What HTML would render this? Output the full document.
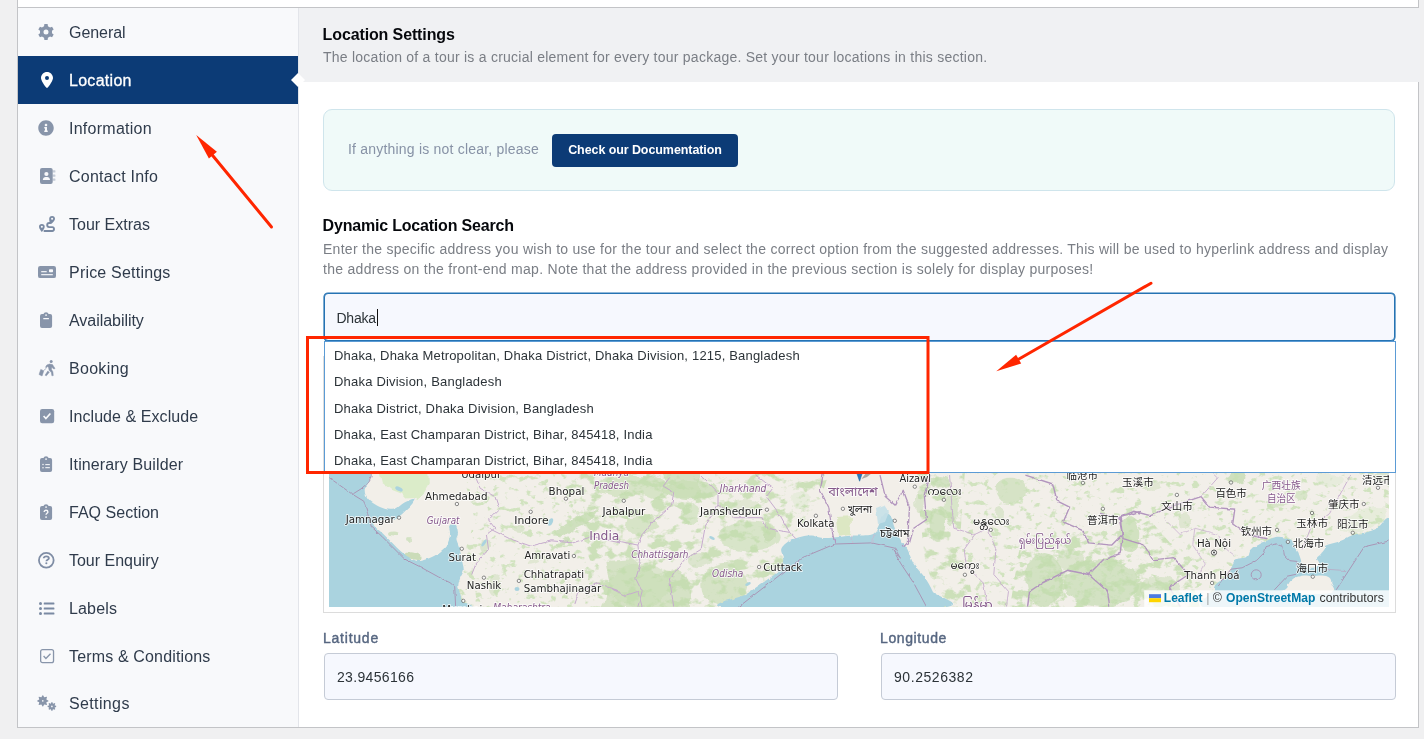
<!DOCTYPE html>
<html lang="en">
<head>
<meta charset="utf-8">
<title>Location Settings</title>
<style>
*{box-sizing:border-box;margin:0;padding:0}
html,body{width:1424px;height:739px;overflow:hidden;background:#f0f0f1}
body{position:relative;font-family:"Liberation Sans",sans-serif;color:#1d2327;-webkit-font-smoothing:antialiased}
.abs{position:absolute}
#root{position:absolute;left:0;top:0;width:1424px;height:739px;overflow:hidden;will-change:transform}
#topbox{left:17px;top:-20px;width:1402px;height:28px;background:#fff;border:1px solid #c3c4c7}
#wrap{left:17px;top:8px;width:1402px;height:720px;background:#fff;border:1px solid #c3c4c7;border-top:none}
#side{left:18px;top:8px;width:280px;height:719px;background:#f8f9fb}
#sideline{left:298px;top:8px;width:1px;height:719px;background:#e3e5ea}
.item{position:absolute;left:0;width:280px;height:48px;line-height:48px;padding-left:51px;font-size:16px;color:#2f3b4b;white-space:nowrap;letter-spacing:.15px}
.item.active{background:#0c3b76;color:#fff;-webkit-text-stroke:.3px #fff}
.item svg{position:absolute;left:18px;top:14px;width:20px;height:20px;fill:#8693a8;overflow:visible}
.item.active svg{fill:#fff}
#diamond{left:291px;top:73px;width:14px;height:14px}
#head{left:299px;top:8px;width:1121px;height:74px;background:#f0f1f3}
#head h1{position:absolute;left:23.6px;top:16.5px;font-size:16px;line-height:20px;font-weight:700;color:#06080c;white-space:nowrap}
#head p{position:absolute;left:24px;top:40px;font-size:14px;line-height:18px;color:#7a7e85;white-space:nowrap}
#notice{left:323px;top:109px;width:1072px;height:82px;background:#f0faf9;border:1px solid #cfe5ec;border-radius:9px}
#notice span{position:absolute;left:24px;top:30px;font-size:14px;line-height:18px;color:#8792a6;white-space:nowrap}
#btn{left:552px;top:134px;width:186px;height:33px;border-radius:4px;background:#0c3b76;color:#fff;font-size:12.5px;font-weight:700;line-height:33px;text-align:center;white-space:nowrap}
#h2{left:322.6px;top:216px;font-size:16px;line-height:20px;font-weight:700;color:#06080c;white-space:nowrap}
.desc{font-size:14px;line-height:18px;color:#7a7e85;white-space:nowrap}
#search{left:324px;top:293px;width:1071px;height:48px;border:1px solid #2573b3;box-shadow:0 0 0 .6px #2573b3;border-radius:4px;background:#f6f8fe}
#search span{position:absolute;left:11.5px;top:15px;font-size:14px;line-height:18px;color:#2c3338;white-space:nowrap}
#caret{left:377px;top:309px;width:1px;height:17px;background:#111}
#mapbox{left:323px;top:356px;width:1073px;height:257px;border:1px solid #dcdcdc;background:#fff}
#map{left:329px;top:362px;width:1060px;height:245px;overflow:hidden;background:#f2efe9}
#dd{left:324px;top:341px;width:1072px;height:132px;background:#fff;border:1px solid #5b9bd5}
#dd div{position:absolute;left:9px;font-size:13px;line-height:16px;color:#2c3338;white-space:nowrap}
.lbl{font-size:14px;line-height:18px;color:#566680;font-weight:400;-webkit-text-stroke:.4px #566680;white-space:nowrap}
.inp{height:47px;border:1px solid #c5cbd6;border-radius:4px;background:#f6f8fe}
.inp span{position:absolute;left:12px;top:14px;font-size:14px;line-height:18px;color:#2c3338;white-space:nowrap;letter-spacing:.2px}
#anno{left:0;top:0;width:1424px;height:739px;pointer-events:none}
#t1{letter-spacing:-0.125px}
#t2{letter-spacing:0.243px}
#t3{letter-spacing:0.205px}
#t4{letter-spacing:-0.083px}
#t5{letter-spacing:-0.195px}
#t6{letter-spacing:0.273px}
#t7{letter-spacing:0.286px}
#d1{letter-spacing:0.189px}
#d2{letter-spacing:0.202px}
#d3{letter-spacing:0.217px}
#d4{letter-spacing:0.193px}
#d5{letter-spacing:0.193px}
#t8{letter-spacing:-0.250px}
#t9{letter-spacing:0.770px}
#t10{letter-spacing:0.600px}
#t11{letter-spacing:0.334px}
#t12{letter-spacing:0.555px}
#s0{letter-spacing:-0.066px}
#s1{letter-spacing:0.284px}
#s2{letter-spacing:0.260px}
#s3{letter-spacing:0.239px}
#s4{letter-spacing:0.000px}
#s5{letter-spacing:0.204px}
#s6{letter-spacing:-0.040px}
#s7{letter-spacing:0.297px}
#s8{letter-spacing:0.062px}
#s9{letter-spacing:0.125px}
#s10{letter-spacing:0.020px}
#s11{letter-spacing:-0.017px}
#s12{letter-spacing:0.160px}
#s13{letter-spacing:0.151px}
#s14{letter-spacing:0.367px}
</style>
</head>
<body>
<div id="root">
<div id="topbox" class="abs"></div>
<div id="wrap" class="abs"></div>
<div id="side" class="abs">
<div class="item" style="top:0px;height:48px;line-height:49px"><svg viewBox="0 0 16 16" style="left:20.0px;top:16.0px;width:16px;height:16px;fill:#8895aa"><path fill-rule="evenodd" d="M9.95 13.78L9.62 15.94L6.38 15.94L6.05 13.78L3.97 12.58L1.94 13.37L0.32 10.57L2.02 9.21L2.02 6.79L0.32 5.43L1.94 2.63L3.97 3.42L6.05 2.22L6.38 0.06L9.62 0.06L9.95 2.22L12.03 3.42L14.06 2.63L15.68 5.43L13.98 6.79L13.98 9.21L15.68 10.57L14.06 13.37L12.03 12.58ZM5.50 8.00a2.50 2.50 0 1 0 5.00 0a2.50 2.50 0 1 0 -5.00 0Z"/></svg><span id="s0">General</span></div>
<div class="item active" style="top:48px;height:48px;line-height:49px"><svg viewBox="0 0 384 512" style="left:22.5px;top:16.0px;width:12px;height:16px;fill:#fff"><path d="M215.700 499.200C267 435 384 279.400 384 192C384 86 298 0 192 0S0 86 0 192c0 87.400 117 243 168.300 307.200c12.300 15.300 35.100 15.300 47.400 0zM192 128a64 64 0 1 1 0 128 64 64 0 1 1 0-128z"/></svg><span id="s1">Location</span></div>
<div class="item" style="top:96px;height:48px;line-height:49px"><svg viewBox="0 0 512 512" style="left:20.3px;top:16.0px;width:16px;height:16px;fill:#8895aa"><path d="M256 8C119.043 8 8 119.083 8 256c0 136.997 111.043 248 248 248s248-111.003 248-248C504 119.083 392.957 8 256 8zm0 110c23.196 0 42 18.804 42 42s-18.804 42-42 42-42-18.804-42-42 18.804-42 42-42zm56 254c0 6.627-5.373 12-12 12h-88c-6.627 0-12-5.373-12-12v-24c0-6.627 5.373-12 12-12h12v-64h-12c-6.627 0-12-5.373-12-12v-24c0-6.627 5.373-12 12-12h64c6.627 0 12 5.373 12 12v100h12c6.627 0 12 5.373 12 12v24z"/></svg><span id="s2">Information</span></div>
<div class="item" style="top:144px;height:48px;line-height:49px"><svg viewBox="0 0 16 16" style="left:21.5px;top:16.0px;width:16px;height:16px;fill:#8895aa"><rect x="0" y="0" width="12.700" height="16" rx="2"/><rect x="12.700" y="2.250" width="2.700" height="2.300" rx=".5" opacity=".45"/><rect x="12.700" y="6.400" width="2.700" height="2.300" rx=".5" opacity=".45"/><rect x="12.700" y="10.500" width="2.700" height="2.300" rx=".5" opacity=".45"/><circle cx="6.400" cy="6" r="2.100" fill="#f8f9fb"/><path d="M2.800 12c0-1.900 1.400-3 2.800-3h1.600c1.400 0 2.800 1.100 2.800 3z" fill="#f8f9fb"/></svg><span id="s3">Contact Info</span></div>
<div class="item" style="top:192px;height:48px;line-height:49px"><svg viewBox="0 0 16 16" style="left:20.5px;top:16.0px;width:16px;height:16px;fill:#8895aa"><g fill="#7a8aa3" stroke="#7a8aa3"><path stroke="none" d="M2.850 8a2.850 2.850 0 0 1 2.850 2.850c0 1.700-1.900 4.100-2.850 5.250C1.900 14.950 0 12.550 0 10.850A2.850 2.850 0 0 1 2.850 8z"/><path stroke="none" d="M13.100-.1a2.900 2.900 0 0 1 2.900 2.900c0 1.600-1.700 3.300-3.500 4.900l-1.900-1.600c-.3-.9-.4-2.100-.4-3.300A2.900 2.900 0 0 1 13.100-.1z"/><path d="M11.500 7H10.200a2.020 2.020 0 0 0 0 4.050H13.200a1.980 1.980 0 0 1 0 3.950H5.400" fill="none" stroke-width="1.850" stroke-linecap="round"/></g><circle cx="2.850" cy="10.800" r="1.050" fill="#f8f9fb"/><circle cx="13.100" cy="2.800" r="1.050" fill="#f8f9fb"/></svg><span id="s4">Tour Extras</span></div>
<div class="item" style="top:240px;height:48px;line-height:49px"><svg viewBox="0 0 18 12" style="left:19.6px;top:18.0px;width:18px;height:12px;fill:#8895aa"><rect x="0" y="0" width="18" height="12.100" rx="2.200"/><rect x="11" y="3.200" width="4" height="3" rx=".8" fill="#f8f9fb"/><rect x="3.200" y="5.100" width="5.500" height="1.150" fill="#f8f9fb"/><rect x="3.200" y="8.100" width="11.600" height="1.150" fill="#f8f9fb"/></svg><span id="s5">Price Settings</span></div>
<div class="item" style="top:288px;height:48px;line-height:49px"><svg viewBox="0 0 12.100 16" style="left:22.4px;top:16.0px;width:12.1px;height:16px;fill:#8895aa"><path d="M3.500 2a2.600 2.200 0 0 1 5.100 0H10.100a2 2 0 0 1 2 2v10a2 2 0 0 1-2 2H2a2 2 0 0 1-2-2V4a2 2 0 0 1 2-2z"/><circle cx="6.050" cy="3.100" r=".9" fill="#f8f9fb"/><rect x="3.300" y="6" width="5.600" height="1.250" fill="#f8f9fb"/></svg><span id="s6">Availability</span></div>
<div class="item" style="top:336px;height:48px;line-height:49px"><svg viewBox="0 0 16 16" style="left:20.7px;top:16.0px;width:16px;height:16px;fill:#8895aa"><circle cx="12.160" cy="1.450" r="1.500"/><g stroke="#8895aa" stroke-width=".5" stroke-linejoin="round"><path d="M7.800 5 10.460 4.050 13.500 4.600 15 6.900 15.950 8.200 15.400 9 13.900 8.400 12.900 7.100 12.350 9.200 13.900 11.800 14.250 15.600 12.900 15.800 12.350 12.600 10.100 10.300 9.500 7.300 8.200 6.500 7.400 7.850 6.500 7.300z"/><path d="M8.750 11.100 10.300 12.200 7.400 15.800 6.100 15.200z"/><path d="M1.750 9.400 4.800 10.700 3.070 16 .04 14.500z"/></g><path d="M6.800 8.400 5.200 10.400" fill="none" stroke="#8895aa" stroke-width=".8"/></svg><span id="s7">Booking</span></div>
<div class="item" style="top:384px;height:48px;line-height:49px"><svg viewBox="0 0 14.200 14.200" style="left:21.5px;top:16.9px;width:14.2px;height:14.2px;fill:#8895aa"><rect width="14.200" height="14.200" rx="2.200"/><path d="M3.600 7 5.900 9.500 10.400 4.550" fill="none" stroke="#f8f9fb" stroke-width="1.700"/></svg><span id="s8">Include &amp; Exclude</span></div>
<div class="item" style="top:432px;height:48px;line-height:49px"><svg viewBox="0 0 12.100 16" style="left:22.4px;top:16.0px;width:12.1px;height:16px;fill:#8895aa"><path d="M3.500 2a2.600 2.200 0 0 1 5.100 0H10.100a2 2 0 0 1 2 2v10a2 2 0 0 1-2 2H2a2 2 0 0 1-2-2V4a2 2 0 0 1 2-2z"/><circle cx="6.050" cy="3.100" r=".9" fill="#f8f9fb"/><circle cx="3" cy="8.600" r=".75" fill="#f8f9fb"/><circle cx="3" cy="11.650" r=".75" fill="#f8f9fb"/><rect x="5.300" y="8.100" width="4.550" height="1.050" fill="#f8f9fb"/><rect x="5.300" y="11.150" width="4.550" height="1.050" fill="#f8f9fb"/></svg><span id="s9">Itinerary Builder</span></div>
<div class="item" style="top:480px;height:48px;line-height:49px"><svg viewBox="0 0 12.100 16" style="left:22.4px;top:16.0px;width:12.1px;height:16px;fill:#8895aa"><path d="M3.500 2a2.600 2.200 0 0 1 5.100 0H10.100a2 2 0 0 1 2 2v10a2 2 0 0 1-2 2H2a2 2 0 0 1-2-2V4a2 2 0 0 1 2-2z"/><circle cx="6.050" cy="3.100" r=".9" fill="#f8f9fb"/><path d="M4.200 7.900c0-1 .8-1.650 1.850-1.650S7.900 6.900 7.900 7.900c0 1.300-1.850 1.300-1.850 2.800" fill="none" stroke="#f8f9fb" stroke-width="1.400"/><circle cx="6.050" cy="13.100" r=".9" fill="#f8f9fb"/></svg><span id="s10">FAQ Section</span></div>
<div class="item" style="top:528px;height:48px;line-height:49px"><svg viewBox="0 0 16.600 16.600" style="left:20.1px;top:15.7px;width:16.6px;height:16.6px;fill:#8895aa"><g fill="#7f8da5" stroke="#7f8da5"><circle cx="8.300" cy="8.300" r="7.350" fill="none" stroke-width="1.800"/><path d="M5.700 6.300c0-1.200 1.100-2 2.600-2s2.600.8 2.600 2c0 1.500-2.500 1.500-2.500 2.900" fill="none" stroke-width="1.800"/><circle cx="8.350" cy="11.200" r="1.050" stroke="none"/></g></svg><span id="s11">Tour Enquiry</span></div>
<div class="item" style="top:576px;height:48px;line-height:49px"><svg viewBox="0 0 16 13" style="left:21.0px;top:17.5px;width:16px;height:13px;fill:#8895aa"><g fill="#7a8aa3"><circle cx="1.500" cy="1.500" r="1.500"/><circle cx="1.500" cy="6.500" r="1.500"/><circle cx="1.500" cy="11.500" r="1.500"/><rect x="4.750" y=".55" width="10.650" height="1.900" rx=".5"/><rect x="4.750" y="5.550" width="10.650" height="1.900" rx=".5"/><rect x="4.750" y="10.550" width="10.650" height="1.900" rx=".5"/></g></svg><span id="s12">Labels</span></div>
<div class="item" style="top:624px;height:48px;line-height:49px"><svg viewBox="0 0 14.200 14.200" style="left:21.5px;top:16.9px;width:14.2px;height:14.2px;fill:#8895aa"><rect x=".65" y=".65" width="12.900" height="12.900" rx="1.900" fill="none" stroke="#8895aa" stroke-width="1.300"/><path d="M3.600 7.100 5.900 9.450 10.500 4.700" fill="none" stroke="#8895aa" stroke-width="1.350"/></svg><span id="s13">Terms &amp; Conditions</span></div>
<div class="item" style="top:672px;height:47px;line-height:48px"><svg viewBox="0 0 20 17" style="left:18.5px;top:15.0px;width:20px;height:17px;fill:#8895aa"><path fill-rule="evenodd" d="M7.22 9.53L6.06 11.59L5.54 11.59L4.38 9.53L4.24 9.47L1.95 10.11L1.59 9.75L2.23 7.46L2.17 7.32L0.11 6.16L0.11 5.64L2.17 4.48L2.23 4.34L1.59 2.05L1.95 1.69L4.24 2.33L4.38 2.27L5.54 0.21L6.06 0.21L7.22 2.27L7.36 2.33L9.65 1.69L10.01 2.05L9.37 4.34L9.43 4.48L11.49 5.64L11.49 6.16L9.43 7.32L9.37 7.46L10.01 9.75L9.65 10.11L7.36 9.47ZM5.00 5.90a0.80 0.80 0 1 0 1.60 0a0.80 0.80 0 1 0 -1.60 0Z"/><path fill-rule="evenodd" d="M15.90 14.28L15.47 15.66L14.33 15.66L13.90 14.28L13.57 14.14L12.29 14.82L11.48 14.01L12.16 12.73L12.02 12.40L10.64 11.97L10.64 10.83L12.02 10.40L12.16 10.07L11.48 8.79L12.29 7.98L13.57 8.66L13.90 8.52L14.33 7.14L15.47 7.14L15.90 8.52L16.23 8.66L17.51 7.98L18.32 8.79L17.64 10.07L17.78 10.40L19.16 10.83L19.16 11.97L17.78 12.40L17.64 12.73L18.32 14.01L17.51 14.82L16.23 14.14ZM14.05 11.40a0.85 0.85 0 1 0 1.70 0a0.85 0.85 0 1 0 -1.70 0Z"/></svg><span id="s14">Settings</span></div>
</div>
<div id="sideline" class="abs"></div>
<div id="head" class="abs">
  <h1 id="t1">Location Settings</h1>
  <p id="t2">The location of a tour is a crucial element for every tour package. Set your tour locations in this section.</p>
</div>
<svg id="diamond" class="abs" viewBox="0 0 14 14"><path d="M0 7L7 0L14 7L7 14Z" fill="#fff"/></svg>

<div id="notice" class="abs"><span id="t3">If anything is not clear, please</span></div>
<div id="btn" class="abs"><span id="t4">Check our Documentation</span></div>

<div id="h2" class="abs"><span id="t5">Dynamic Location Search</span></div>
<div id="t6" class="abs desc" style="left:323px;top:240px">Enter the specific address you wish to use for the tour and select the correct option from the suggested addresses. This will be used to hyperlink address and display</div>
<div id="t7" class="abs desc" style="left:323px;top:260px">the address on the front-end map. Note that the address provided in the previous section is solely for display purposes!</div>

<div id="search" class="abs"><span id="t8">Dhaka</span></div>
<div id="caret" class="abs"></div>

<div id="mapbox" class="abs"></div>
<div id="map" class="abs">
<svg viewBox="329 362 1060 245" width="1060" height="245" style="position:absolute;left:0;top:0">
<defs><filter id="rough" x="-5%" y="-5%" width="110%" height="110%"><feTurbulence type="fractalNoise" baseFrequency="0.09" numOctaves="2" seed="4" result="n"/><feDisplacementMap in="SourceGraphic" in2="n" scale="7" xChannelSelector="R" yChannelSelector="G"/></filter><filter id="speck" x="0" y="0" width="100%" height="100%"><feTurbulence type="fractalNoise" baseFrequency="0.075 0.1" numOctaves="4" seed="11" result="n"/><feColorMatrix in="n" type="matrix" values="0 0 0 0 0 0 0 0 0 0 0 0 0 0 0 7 0 0 0 -3.55" result="m"/><feComposite in="SourceGraphic" in2="m" operator="in"/></filter><filter id="speck2" x="0" y="0" width="100%" height="100%"><feTurbulence type="fractalNoise" baseFrequency="0.12 0.16" numOctaves="3" seed="5" result="n"/><feColorMatrix in="n" type="matrix" values="0 0 0 0 0 0 0 0 0 0 0 0 0 0 0 8 0 0 0 -4.7" result="m"/><feComposite in="SourceGraphic" in2="m" operator="in"/></filter><filter id="rough2" x="-5%" y="-5%" width="110%" height="110%"><feTurbulence type="fractalNoise" baseFrequency="0.16" numOctaves="2" seed="9" result="n"/><feDisplacementMap in="SourceGraphic" in2="n" scale="3" xChannelSelector="R" yChannelSelector="G"/></filter></defs>
<rect x="329" y="362" width="1060" height="245" fill="#f2efe9"/>
<g filter="url(#rough)" opacity=".8"><path d="M379.0 470.0 L428.2 470.0 L428.8 483.3 L423.5 492.7 L416.3 501.2 L413.6 498.0 L406.4 498.4 L400.8 492.7 L391.3 488.9 L381.8 481.4 Z" fill="#d3ebbf" opacity="0.95"/><path d="M553.4 532.5 L568.5 521.2 L583.7 513.6 L598.9 510.7 L593.2 519.3 L576.1 526.9 L561.0 538.2 Z" fill="#bcd8a6" opacity=".8"/><path d="M555.3 545.8 L568.5 536.3 L570.4 540.1 L559.1 547.7 Z" fill="#bcd8a6" opacity=".8"/><path d="M591.3 481.4 L627.3 474.0 L659.5 478.0 L674.7 490.8 L659.5 500.3 L640.6 492.7 L614.0 496.5 L598.9 492.7 Z" fill="#c3dcae" opacity=".7"/><path d="M627.3 517.4 L651.9 513.6 L659.5 526.9 L640.6 536.3 L625.4 530.6 Z" fill="#c3dcae" opacity=".7"/><path d="M606.4 561.0 L633.0 559.1 L659.5 576.1 L678.5 568.5 L690.0 583.7 L690.0 607.0 L602.6 607.0 L610.2 583.7 Z" fill="#bfd9a9" opacity=".7"/><path d="M659.5 470.0 L700.0 470.0 L700.0 498.4 L674.7 496.5 Z" fill="#bfd9a9" opacity=".7"/><ellipse cx="690.6" cy="490.3" rx="27.0" ry="9.0" fill="#bcd8a6" opacity="0.70"/><ellipse cx="689.5" cy="514.5" rx="10.0" ry="10.0" fill="#bcd8a6" opacity="0.60"/><ellipse cx="749.6" cy="536.6" rx="31.0" ry="15.0" fill="#bcd8a6" opacity="0.60"/><ellipse cx="724.3" cy="585.0" rx="23.0" ry="22.0" fill="#bcd8a6" opacity="0.65"/><ellipse cx="640.0" cy="585.0" rx="30.0" ry="22.0" fill="#bcd8a6" opacity="0.50"/><ellipse cx="770.1" cy="534.5" rx="6.0" ry="8.0" fill="#bcd8a6" opacity="0.85"/><ellipse cx="520.0" cy="528.0" rx="8.0" ry="4.0" fill="#bcd8a6" opacity="0.50"/><ellipse cx="537.0" cy="560.0" rx="9.0" ry="3.0" fill="#bcd8a6" opacity="0.40" transform="rotate(-25 537.0 560.0)"/><ellipse cx="486.0" cy="545.0" rx="5.0" ry="7.0" fill="#bcd8a6" opacity="0.50"/><ellipse cx="495.0" cy="585.0" rx="6.0" ry="12.0" fill="#bcd8a6" opacity="0.45"/><ellipse cx="700.0" cy="560.0" rx="12.0" ry="7.0" fill="#bcd8a6" opacity="0.50"/><ellipse cx="745.0" cy="505.0" rx="14.0" ry="6.0" fill="#bcd8a6" opacity="0.40"/><ellipse cx="800.0" cy="500.0" rx="10.0" ry="8.0" fill="#cfe6bd" opacity="0.35"/><ellipse cx="413.0" cy="556.0" rx="8.0" ry="4.0" fill="#b5d29f" opacity="0.80" transform="rotate(20 413.0 556.0)"/><ellipse cx="393.0" cy="534.0" rx="5.0" ry="2.5" fill="#bcd8a6" opacity="0.70"/><ellipse cx="409.0" cy="541.0" rx="2.0" ry="2.0" fill="#bcd8a6" opacity="0.70"/><path d="M836.0 518.0 L852.0 517.0 L851.0 535.0 L838.0 537.0 Z" fill="#d4e3b5" opacity=".9"/><ellipse cx="940.0" cy="481.9" rx="9.5" ry="6.0" fill="#bcd8a6" opacity="0.70"/><ellipse cx="936.9" cy="524.0" rx="8.4" ry="17.0" fill="#bcd8a6" opacity="0.70"/><ellipse cx="951.7" cy="506.0" rx="6.3" ry="18.0" fill="#bcd8a6" opacity="0.60"/><ellipse cx="1010.6" cy="490.3" rx="15.0" ry="12.6" fill="#bcd8a6" opacity="0.65"/><ellipse cx="1044.4" cy="580.0" rx="19.0" ry="27.0" fill="#bcd8a6" opacity="0.70"/><ellipse cx="1101.7" cy="583.0" rx="38.0" ry="24.0" fill="#bcd8a6" opacity="0.70"/><ellipse cx="1129.3" cy="534.0" rx="11.0" ry="18.0" fill="#bcd8a6" opacity="0.75"/><ellipse cx="1070.0" cy="560.0" rx="14.0" ry="10.0" fill="#bcd8a6" opacity="0.50"/><ellipse cx="1000.0" cy="515.0" rx="5.0" ry="10.0" fill="#bcd8a6" opacity="0.50"/><ellipse cx="920.0" cy="500.0" rx="5.0" ry="12.0" fill="#bcd8a6" opacity="0.50"/><ellipse cx="1185.0" cy="520.0" rx="6.0" ry="9.0" fill="#bcd8a6" opacity="0.45"/><ellipse cx="1160.0" cy="590.0" rx="20.0" ry="14.0" fill="#bcd8a6" opacity="0.50"/><ellipse cx="1235.9" cy="478.0" rx="9.5" ry="6.3" fill="#bcd8a6" opacity="0.80"/><ellipse cx="1278.0" cy="505.0" rx="11.0" ry="2.5" fill="#bcd8a6" opacity="0.60"/><ellipse cx="1302.2" cy="495.5" rx="6.3" ry="5.3" fill="#bcd8a6" opacity="0.60"/><ellipse cx="1363.3" cy="519.8" rx="25.0" ry="10.0" fill="#cfe6bd" opacity="0.40" transform="rotate(-20 1363.3 519.8)"/><ellipse cx="1150.0" cy="485.0" rx="10.0" ry="6.0" fill="#bcd8a6" opacity="0.40"/><ellipse cx="1330.0" cy="480.0" rx="14.0" ry="6.0" fill="#cfe6bd" opacity="0.35"/><ellipse cx="1383.0" cy="476.0" rx="8.0" ry="6.0" fill="#bcd8a6" opacity="0.50"/></g>
<g filter="url(#speck)" opacity=".8"><path d="M560.0 470.0 L830.0 470.0 L820.0 500.0 L790.0 540.0 L780.0 575.0 L740.0 607.0 L585.0 607.0 L590.0 560.0 L575.0 520.0 Z" fill="#c2dcad"/><path d="M1020.0 545.0 L1060.0 530.0 L1110.0 540.0 L1150.0 520.0 L1185.0 560.0 L1200.0 607.0 L1010.0 607.0 Z" fill="#c2dcad"/><path d="M915.0 470.0 L965.0 470.0 L960.0 540.0 L975.0 607.0 L940.0 607.0 L925.0 560.0 Z" fill="#c2dcad"/></g>
<g filter="url(#speck2)" opacity=".8"><path d="M462.0 470.0 L575.0 470.0 L590.0 530.0 L600.0 607.0 L450.0 607.0 L462.0 560.0 L475.0 520.0 Z" fill="#c8e0b5"/><path d="M965.0 470.0 L1389.0 470.0 L1389.0 540.0 L1330.0 535.0 L1290.0 540.0 L1240.0 560.0 L1215.0 607.0 L975.0 607.0 L960.0 540.0 Z" fill="#c8e0b5"/></g>
<g filter="url(#rough2)"><path d="M329.2 458.6 C336.2 433.7 364.4 455.9 371.4 458.6 C378.4 461.4 372.0 471.0 371.4 475.3 C370.8 479.6 368.7 482.1 367.6 484.2 C366.5 486.3 365.1 486.3 364.8 488.0 C364.5 489.7 364.8 492.4 365.7 494.6 C366.7 496.8 368.1 499.2 370.5 501.2 C372.8 503.3 376.6 505.5 379.9 506.9 C383.2 508.4 387.5 509.6 390.3 509.8 C393.2 509.9 394.6 509.1 397.0 507.9 C399.3 506.7 402.0 504.1 404.5 502.6 C407.1 501.1 410.9 499.4 412.5 499.0 C414.1 498.6 414.6 499.3 414.4 500.3 C414.2 501.3 412.7 503.3 411.2 505.0 C409.7 506.8 407.4 508.9 405.5 510.7 C403.6 512.6 401.1 514.8 399.8 516.0 C398.5 517.3 400.0 517.7 397.9 518.3 C395.9 518.9 390.7 519.2 387.5 519.6 C384.3 520.0 381.2 520.2 379.0 520.8 C376.7 521.3 374.6 522.1 373.9 523.0 C373.1 524.0 373.3 524.9 374.6 526.4 C375.9 528.0 379.4 530.2 381.8 532.5 C384.3 534.8 386.9 537.6 389.4 540.1 C391.9 542.6 394.4 545.3 397.0 547.7 C399.5 550.0 402.0 552.4 404.5 554.3 C407.1 556.2 409.8 557.9 412.1 559.0 C414.5 560.2 416.5 561.0 418.8 561.1 C421.0 561.2 423.0 560.2 425.4 559.4 C427.7 558.6 430.4 557.7 433.0 556.4 C435.5 555.0 438.3 553.2 440.5 551.4 C442.7 549.7 444.8 547.8 446.2 545.8 C447.7 543.7 448.6 541.3 449.2 539.1 C449.9 536.9 450.0 534.6 450.0 532.5 C450.0 530.4 448.8 528.2 449.1 526.8 C449.3 525.4 450.3 524.4 451.5 524.2 C452.7 523.9 455.0 523.8 456.1 525.3 C457.1 526.8 457.9 531.1 458.0 533.4 C458.0 535.8 456.3 537.1 456.4 539.1 C456.6 541.2 458.0 543.4 458.7 545.8 C459.4 548.1 460.0 550.5 460.6 553.3 C461.2 556.2 462.0 560.0 462.5 562.8 C463.0 565.6 464.0 567.9 463.6 570.4 C463.3 572.9 461.1 575.4 460.2 578.0 C459.3 580.5 458.4 583.0 458.3 585.5 C458.3 588.1 459.3 590.6 459.8 593.1 C460.4 595.6 461.2 598.2 461.7 600.7 C462.2 603.2 485.0 607.0 462.9 608.3 C440.8 609.5 351.5 633.2 329.2 608.3 C306.9 583.3 322.1 483.6 329.2 458.6Z" fill="#aad3df"/><path d="M728.5 608.0 C696.6 605.6 740.8 598.4 747.5 593.5 C754.2 588.6 763.2 582.7 768.5 578.8 C773.8 574.9 776.6 573.5 779.1 570.3 C781.6 567.1 782.9 563.3 783.3 559.8 C783.6 556.3 780.2 552.5 781.2 549.3 C782.2 546.1 786.1 542.9 789.6 540.8 C793.1 538.7 798.7 537.5 802.2 536.6 C805.7 535.7 807.5 535.4 810.7 535.6 C813.9 535.8 817.7 537.4 821.2 537.7 C824.7 538.1 826.4 538.1 831.7 537.7 C837.0 537.4 846.1 536.1 852.8 535.6 C859.5 535.1 867.6 535.9 871.8 534.5 C876.0 533.1 876.5 529.6 878.0 527.0 C879.5 524.4 879.5 521.2 880.5 519.0 C881.5 516.8 882.7 514.3 884.0 513.5 C885.3 512.7 887.2 513.2 888.5 514.0 C889.8 514.8 890.6 515.6 891.6 518.0 C892.6 520.4 893.2 524.4 894.8 528.2 C896.4 532.0 899.0 537.3 901.1 540.8 C903.2 544.3 905.3 545.4 907.4 549.3 C909.5 553.2 910.9 559.4 913.7 564.0 C916.5 568.6 921.1 572.1 924.3 576.7 C927.5 581.3 930.2 586.2 932.7 591.4 C935.2 596.6 973.0 605.2 939.0 608.0 C905.0 610.8 760.4 610.4 728.5 608.0Z" fill="#aad3df"/><path d="M876.0 508.0 L884.0 505.0 L889.0 512.0 L885.0 522.0 L878.0 524.0 Z" fill="#c5e0e8" opacity=".9"/><path d="M1214.0 609.9 C1184.6 606.5 1213.6 594.3 1214.0 589.8 C1214.5 585.4 1214.5 585.5 1216.9 583.2 C1219.2 580.9 1225.5 579.2 1228.1 576.2 C1230.7 573.1 1230.9 567.8 1232.3 564.9 C1233.7 562.1 1233.9 560.7 1236.5 559.3 C1239.1 557.9 1245.4 558.2 1247.8 556.5 C1250.1 554.9 1248.7 551.6 1250.6 549.5 C1252.4 547.4 1256.4 545.3 1259.0 543.9 C1261.6 542.5 1263.2 542.2 1266.0 541.1 C1268.8 539.9 1272.8 537.4 1275.8 536.9 C1278.9 536.3 1281.7 536.9 1284.3 537.6 C1286.8 538.3 1289.2 539.7 1291.3 541.1 C1293.4 542.5 1293.9 544.8 1296.9 546.0 C1300.0 547.2 1305.3 547.7 1309.6 548.1 C1313.8 548.4 1319.4 548.6 1322.2 548.1 C1325.0 547.6 1323.4 546.5 1326.4 545.3 C1329.4 544.1 1336.2 542.7 1340.4 541.1 C1344.7 539.4 1347.5 536.9 1351.7 535.4 C1355.9 534.0 1361.5 533.8 1365.7 532.6 C1369.9 531.5 1372.8 530.1 1377.0 528.4 C1381.2 526.8 1388.7 509.2 1391.0 522.8 C1393.4 536.4 1420.5 595.4 1391.0 609.9 C1361.5 624.4 1243.5 613.2 1214.0 609.9Z" fill="#aad3df"/></g>
<g filter="url(#rough2)"><path d="M1295.5 543.9 C1299.7 542.8 1319.3 544.3 1323.6 546.0 C1327.9 547.6 1322.2 551.7 1321.1 553.7 C1319.9 555.7 1317.1 556.3 1316.9 557.9 C1316.6 559.6 1319.7 562.0 1319.4 563.5 C1319.1 565.1 1317.2 566.7 1315.2 567.3 C1313.1 568.0 1309.1 568.0 1307.0 567.3 C1304.9 566.7 1303.7 565.1 1302.5 563.5 C1301.4 562.0 1301.0 559.8 1300.3 557.9 C1299.6 556.0 1299.1 554.6 1298.3 552.3 C1297.5 550.0 1291.3 544.9 1295.5 543.9Z" fill="#f2efe9"/><path d="M1289.9 581.8 C1291.2 580.2 1293.2 578.6 1295.5 577.6 C1297.8 576.6 1301.1 575.8 1303.9 575.6 C1306.7 575.4 1309.3 576.3 1312.4 576.3 C1315.4 576.3 1319.4 575.4 1322.2 575.6 C1325.0 575.8 1327.7 576.3 1329.2 577.6 C1330.8 578.8 1331.2 580.6 1331.5 583.2 C1331.7 585.8 1338.2 591.4 1330.6 593.0 C1323.0 594.7 1292.9 594.0 1285.7 593.0 C1278.5 592.1 1286.7 589.3 1287.4 587.4 C1288.1 585.5 1288.5 583.4 1289.9 581.8Z" fill="#f2efe9"/></g>
<ellipse cx="399" cy="489" rx="4" ry="2" fill="#aad3df" transform="rotate(25 399 489)"/>
<ellipse cx="550.5" cy="522" rx="2.200" ry="4" fill="#aad3df" transform="rotate(25 550.5 522)"/>
<ellipse cx="517" cy="589" rx="2.500" ry="2" fill="#aad3df"/>
<ellipse cx="484" cy="543" rx="1.500" ry="4" fill="#aad3df" transform="rotate(35 484 543)"/>
<ellipse cx="712" cy="538" rx="3" ry="1.500" fill="#aad3df" transform="rotate(25 712 538)"/>
<ellipse cx="748" cy="584" rx="3" ry="1.500" fill="#aad3df" transform="rotate(-25 748 584)"/>
<g filter="url(#rough2)" stroke-linejoin="round"><path d="M329.2 477.6 L351.5 493.7 L363.8 501.2 L367.6 513.6 L371.4 526.8 L381.8 536.3 L391.3 545.8 L404.5 559.0 L419.7 566.6 L438.6 577.0 L450.0 582.7 L454.7 586.5 L455.7 608.3" fill="none" stroke="#a995b5" stroke-width="1"/><path d="M371.4 475.3 L369.5 481.4 L361.0 488.9 L353.4 493.7" fill="none" stroke="#a995b5" stroke-width="1"/><path d="M736.9 608.3 L802.2 557.7 L834.9 544.0 L871.8 542.9 L894.9 548.2 L900.0 557.7 L892.7 549.3 L901.1 564.0 L913.7 583.0 L926.4 606.6" fill="none" stroke="#a995b5" stroke-width="1"/><path d="M834.9 544.0 L832.8 534.5 L828.6 507.1 L820.2 490.3 L823.3 473.4" fill="none" stroke="#b295be" stroke-width="1.200"/><path d="M852.8 542.9 L851.8 534.5" fill="none" stroke="#c9b9d0" stroke-width=".8"/><path d="M872.8 542.9 L873.9 534.5" fill="none" stroke="#c9b9d0" stroke-width=".8"/><path d="M1218.3 586.0 L1230.9 569.2 L1242.1 567.8 L1256.2 560.7 L1264.6 552.3 L1266.0 546.7 L1275.8 543.9 L1282.9 546.7 L1284.3 555.1 L1289.9 560.7 L1296.9 561.4 L1298.3 566.3" fill="none" stroke="#a995b5" stroke-width="1"/><path d="M1274.4 589.8 L1287.1 576.2 L1296.9 574.1" fill="none" stroke="#a995b5" stroke-width="1"/><path d="M1336.2 589.8 L1364.3 546.7 L1388.9 541.1" fill="none" stroke="#a995b5" stroke-width="1"/><path d="M1326.4 569.2 L1346.1 570.6" fill="none" stroke="#b9a9c4" stroke-width=".8"/><circle cx="1256.2" cy="574.8" r="5" fill="none" stroke="#a995b5" stroke-width="1"/><path d="M474.8 475.1 L480.1 488.2 L494.9 496.6 L499.1 509.2 L488.5 519.8 L494.9 528.2 L486.4 534.5 L488.5 549.3 L475.9 564.0 L471.7 574.5" fill="none" stroke="#c6abce" stroke-width="1"/><path d="M488.5 528.2 L509.6 538.7 L530.7 546.1 L551.7 540.8 L572.8 542.9 L591.8 536.6 L620.0 542.9 L616.9 540.8 L637.9 545.1 L642.1 534.5 L654.8 519.8 L671.6 505.0 L673.7 492.4 L663.2 486.1 L669.5 477.6" fill="none" stroke="#c6abce" stroke-width="1"/><path d="M574.9 604.0 L579.1 591.4 L598.1 583.0 L620.0 591.4 L612.6 589.3 L625.3 595.6 L637.9 591.4 L642.1 606.6" fill="none" stroke="#c6abce" stroke-width="1"/><path d="M637.9 545.1 L640.0 564.0 L635.8 578.8 L642.1 591.4 L637.9 606.6" fill="none" stroke="#c6abce" stroke-width="1"/><path d="M701.1 475.1 L718.0 492.4 L718.0 505.0 L734.8 517.7 L762.2 517.7 L766.4 528.2 L789.6 532.4 L795.9 538.7" fill="none" stroke="#c6abce" stroke-width="1"/><path d="M718.0 505.0 L705.3 526.1 L701.1 549.3 L684.3 559.8 L669.5 578.8 L673.7 606.6" fill="none" stroke="#c6abce" stroke-width="1"/><path d="M755.9 475.1 L772.8 488.2 L766.4 496.6 L779.1 513.5 L789.6 532.4" fill="none" stroke="#c6abce" stroke-width="1"/><path d="M880.0 475.1 L885.3 496.6 L894.8 505.0 L903.2 490.3 L909.5 507.1 L907.4 542.9 L903.2 547.2" fill="none" stroke="#b295be" stroke-width="1.300"/><path d="M930.6 475.1 L924.3 494.5 L926.4 519.8 L913.7 528.2 L909.5 542.9" fill="none" stroke="#b295be" stroke-width="1.300"/><path d="M1025.4 475.1 L1052.8 484.0 L1057.0 500.8 L1069.6 507.1 L1063.3 521.9 L1082.3 530.3 L1088.6 542.9 L1111.8 545.1 L1122.3 534.5 L1120.2 517.7 L1140.0 511.3" fill="none" stroke="#b295be" stroke-width="1.400"/><path d="M1122.3 534.5 L1120.2 553.5 L1103.3 559.8 L1088.6 574.5 L1067.5 570.3 L1042.2 583.0 L1029.6 591.4 L1027.5 606.6" fill="none" stroke="#b295be" stroke-width="1.400"/><path d="M1088.6 574.5 L1107.6 591.4 L1109.7 606.6" fill="none" stroke="#b295be" stroke-width="1.300"/><path d="M949.5 475.1 L953.8 528.2 L974.8 534.5 L987.5 528.2 L995.9 549.3 L993.8 574.5 L1008.5 591.4 L1006.4 606.6" fill="none" stroke="#c6abce" stroke-width=".9"/><path d="M974.8 534.5 L964.3 549.3 L966.4 566.1 L983.3 583.0 L987.5 606.6" fill="none" stroke="#c6abce" stroke-width=".9"/><path d="M1100.0 513.5 L1119.0 517.7 L1133.7 511.3 L1150.6 515.6 L1169.5 507.1 L1201.1 496.6 L1209.5 507.1 L1234.8 509.2 L1232.7 524.0 L1247.5 534.5 L1266.4 538.7" fill="none" stroke="#b295be" stroke-width="1.400"/><path d="M1119.0 517.7 L1123.2 538.7 L1144.2 545.1 L1152.7 559.8 L1173.7 557.7 L1188.5 574.5 L1169.5 587.2 L1180.1 606.6" fill="none" stroke="#b295be" stroke-width="1.300"/><path d="M1201.1 496.6 L1218.0 477.6 L1213.8 473.4" fill="none" stroke="#c6abce" stroke-width=".9"/><path d="M1350.7 475.1 L1342.3 490.3 L1329.6 513.5 L1310.7 528.2 L1302.2 549.3" fill="none" stroke="#c6abce" stroke-width=".9"/><path d="M1163.2 517.7 L1180.1 534.5 L1194.8 528.2 L1218.0 534.5 L1226.4 549.3 L1234.8 555.6" fill="none" stroke="#c6abce" stroke-width=".7"/><path d="M1194.8 528.2 L1192.7 545.1 L1205.3 564.0 L1196.9 578.8" fill="none" stroke="#c6abce" stroke-width=".7"/></g>
<path d="M861.500 479 L866 473 L872 473 L867 477 Z" fill="#000" opacity=".3"/>
<path d="M855 468 L864 468 L859.600 481.200 Z" fill="#2a7ab9" stroke="#2266a0" stroke-width=".6"/>
<text x="461.2" y="477.6" font-family="DejaVu Sans, sans-serif" font-size="11" fill="#222" textLength="40.0" lengthAdjust="spacingAndGlyphs" stroke="#fff" stroke-opacity=".75" stroke-width="1.8" paint-order="stroke" stroke-linejoin="round">Udaipur</text><text x="424.9" y="500.2" font-family="DejaVu Sans, sans-serif" font-size="11" fill="#222" textLength="62.6" lengthAdjust="spacingAndGlyphs" stroke="#fff" stroke-opacity=".75" stroke-width="1.8" paint-order="stroke" stroke-linejoin="round">Ahmedabad</text><circle cx="456.9" cy="504.0" r="1.7" fill="#fff" fill-opacity=".7" stroke="#6b6b6b" stroke-width=".8"/><text x="345.7" y="522.9" font-family="DejaVu Sans, sans-serif" font-size="11" fill="#222" textLength="49.1" lengthAdjust="spacingAndGlyphs" stroke="#fff" stroke-opacity=".75" stroke-width="1.8" paint-order="stroke" stroke-linejoin="round">Jamnagar</text><circle cx="399.0" cy="517.7" r="1.7" fill="#fff" fill-opacity=".7" stroke="#6b6b6b" stroke-width=".8"/><text x="426.8" y="523.6" font-family="DejaVu Sans, sans-serif" font-size="10" fill="#86598c" font-style="italic" textLength="32.7" lengthAdjust="spacingAndGlyphs" stroke="#fff" stroke-opacity=".75" stroke-width="1.8" paint-order="stroke" stroke-linejoin="round">Gujarat</text><text x="548.6" y="494.5" font-family="DejaVu Sans, sans-serif" font-size="11" fill="#222" textLength="35.8" lengthAdjust="spacingAndGlyphs" stroke="#fff" stroke-opacity=".75" stroke-width="1.8" paint-order="stroke" stroke-linejoin="round">Bhopal</text><circle cx="565.9" cy="498.7" r="1.7" fill="#fff" fill-opacity=".7" stroke="#6b6b6b" stroke-width=".8"/><text x="514.2" y="524.0" font-family="DejaVu Sans, sans-serif" font-size="11" fill="#222" textLength="34.4" lengthAdjust="spacingAndGlyphs" stroke="#fff" stroke-opacity=".75" stroke-width="1.8" paint-order="stroke" stroke-linejoin="round">Indore</text><circle cx="530.7" cy="511.8" r="1.7" fill="#fff" fill-opacity=".7" stroke="#6b6b6b" stroke-width=".8"/><text x="593.9" y="475.5" font-family="DejaVu Sans, sans-serif" font-size="10" fill="#86598c" font-style="italic" textLength="35.1" lengthAdjust="spacingAndGlyphs" stroke="#fff" stroke-opacity=".75" stroke-width="1.8" paint-order="stroke" stroke-linejoin="round">Madhya</text><text x="593.9" y="489.2" font-family="DejaVu Sans, sans-serif" font-size="10" fill="#86598c" font-style="italic" textLength="35.1" lengthAdjust="spacingAndGlyphs" stroke="#fff" stroke-opacity=".75" stroke-width="1.8" paint-order="stroke" stroke-linejoin="round">Pradesh</text><text x="589.2" y="539.8" font-family="DejaVu Sans, sans-serif" font-size="12.5" fill="#84588a" textLength="30.2" lengthAdjust="spacingAndGlyphs" stroke="#fff" stroke-opacity=".75" stroke-width="1.8" paint-order="stroke" stroke-linejoin="round">India</text><text x="448.5" y="560.9" font-family="DejaVu Sans, sans-serif" font-size="11" fill="#222" textLength="27.4" lengthAdjust="spacingAndGlyphs" stroke="#fff" stroke-opacity=".75" stroke-width="1.8" paint-order="stroke" stroke-linejoin="round">Surat</text><circle cx="461.8" cy="548.8" r="1.7" fill="#fff" fill-opacity=".7" stroke="#6b6b6b" stroke-width=".8"/><text x="524.4" y="559.2" font-family="DejaVu Sans, sans-serif" font-size="11" fill="#222" textLength="45.9" lengthAdjust="spacingAndGlyphs" stroke="#fff" stroke-opacity=".75" stroke-width="1.8" paint-order="stroke" stroke-linejoin="round">Amravati</text><circle cx="573.9" cy="556.0" r="1.7" fill="#fff" fill-opacity=".7" stroke="#6b6b6b" stroke-width=".8"/><text x="523.7" y="578.1" font-family="DejaVu Sans, sans-serif" font-size="11" fill="#222" textLength="60.3" lengthAdjust="spacingAndGlyphs" stroke="#fff" stroke-opacity=".75" stroke-width="1.8" paint-order="stroke" stroke-linejoin="round">Chhatrapati</text><text x="523.7" y="592.0" font-family="DejaVu Sans, sans-serif" font-size="11" fill="#222" textLength="77.5" lengthAdjust="spacingAndGlyphs" stroke="#fff" stroke-opacity=".75" stroke-width="1.8" paint-order="stroke" stroke-linejoin="round">Sambhajinagar</text><circle cx="518.9" cy="580.9" r="1.7" fill="#fff" fill-opacity=".7" stroke="#6b6b6b" stroke-width=".8"/><text x="466.8" y="589.3" font-family="DejaVu Sans, sans-serif" font-size="11" fill="#222" textLength="34.4" lengthAdjust="spacingAndGlyphs" stroke="#fff" stroke-opacity=".75" stroke-width="1.8" paint-order="stroke" stroke-linejoin="round">Nashik</text><circle cx="483.9" cy="577.7" r="1.7" fill="#fff" fill-opacity=".7" stroke="#6b6b6b" stroke-width=".8"/><text x="442.2" y="612.8" font-family="DejaVu Sans, sans-serif" font-size="11" fill="#222" textLength="40.0" lengthAdjust="spacingAndGlyphs" stroke="#fff" stroke-opacity=".75" stroke-width="1.8" paint-order="stroke" stroke-linejoin="round">Mumbai</text><circle cx="463.3" cy="600.9" r="1.7" fill="#fff" fill-opacity=".7" stroke="#6b6b6b" stroke-width=".8"/><text x="493.2" y="611.0" font-family="DejaVu Sans, sans-serif" font-size="10" fill="#86598c" font-style="italic" textLength="57.5" lengthAdjust="spacingAndGlyphs" stroke="#fff" stroke-opacity=".75" stroke-width="1.8" paint-order="stroke" stroke-linejoin="round">Maharashtra</text><text x="602.5" y="514.5" font-family="DejaVu Sans, sans-serif" font-size="11" fill="#222" textLength="42.8" lengthAdjust="spacingAndGlyphs" stroke="#fff" stroke-opacity=".75" stroke-width="1.8" paint-order="stroke" stroke-linejoin="round">Jabalpur</text><circle cx="623.8" cy="500.8" r="1.7" fill="#fff" fill-opacity=".7" stroke="#6b6b6b" stroke-width=".8"/><text x="719.7" y="492.4" font-family="DejaVu Sans, sans-serif" font-size="10" fill="#86598c" font-style="italic" textLength="46.7" lengthAdjust="spacingAndGlyphs" stroke="#fff" stroke-opacity=".75" stroke-width="1.8" paint-order="stroke" stroke-linejoin="round">Jharkhand</text><text x="700.0" y="514.5" font-family="DejaVu Sans, sans-serif" font-size="11" fill="#222" textLength="62.2" lengthAdjust="spacingAndGlyphs" stroke="#fff" stroke-opacity=".75" stroke-width="1.8" paint-order="stroke" stroke-linejoin="round">Jamshedpur</text><circle cx="766.9" cy="509.7" r="1.7" fill="#fff" fill-opacity=".7" stroke="#6b6b6b" stroke-width=".8"/><text x="631.2" y="557.7" font-family="DejaVu Sans, sans-serif" font-size="10" fill="#86598c" font-style="italic" textLength="57.3" lengthAdjust="spacingAndGlyphs" stroke="#fff" stroke-opacity=".75" stroke-width="1.8" paint-order="stroke" stroke-linejoin="round">Chhattisgarh</text><text x="712.1" y="576.7" font-family="DejaVu Sans, sans-serif" font-size="10" fill="#86598c" font-style="italic" textLength="31.2" lengthAdjust="spacingAndGlyphs" stroke="#fff" stroke-opacity=".75" stroke-width="1.8" paint-order="stroke" stroke-linejoin="round">Odisha</text><text x="763.3" y="570.8" font-family="DejaVu Sans, sans-serif" font-size="11" fill="#222" textLength="38.9" lengthAdjust="spacingAndGlyphs" stroke="#fff" stroke-opacity=".75" stroke-width="1.8" paint-order="stroke" stroke-linejoin="round">Cuttack</text><circle cx="759.1" cy="567.0" r="1.7" fill="#fff" fill-opacity=".7" stroke="#6b6b6b" stroke-width=".8"/><text x="797.0" y="526.5" font-family="DejaVu Sans, sans-serif" font-size="11" fill="#222" textLength="37.5" lengthAdjust="spacingAndGlyphs" stroke="#fff" stroke-opacity=".75" stroke-width="1.8" paint-order="stroke" stroke-linejoin="round">Kolkata</text><circle cx="815.9" cy="515.8" r="1.7" fill="#fff" fill-opacity=".7" stroke="#6b6b6b" stroke-width=".8"/><text x="828.2" y="496.2" font-family="DejaVu Sans, Noto Sans Bengali, Noto Sans Myanmar, sans-serif" font-size="12" fill="#84588a" textLength="49.5" lengthAdjust="spacingAndGlyphs" stroke="#fff" stroke-opacity=".75" stroke-width="1.8" paint-order="stroke" stroke-linejoin="round">বাংলাদেশ</text><text x="847.5" y="513.0" font-family="DejaVu Sans, Noto Sans Bengali, Noto Sans Myanmar, sans-serif" font-size="11" fill="#222" textLength="24.7" lengthAdjust="spacingAndGlyphs" stroke="#fff" stroke-opacity=".75" stroke-width="1.8" paint-order="stroke" stroke-linejoin="round">খুলনা</text><circle cx="842.9" cy="508.8" r="1.7" fill="#fff" fill-opacity=".7" stroke="#6b6b6b" stroke-width=".8"/><text x="880.0" y="536.6" font-family="DejaVu Sans, Noto Sans Bengali, Noto Sans Myanmar, sans-serif" font-size="11" fill="#222" textLength="29.5" lengthAdjust="spacingAndGlyphs" stroke="#fff" stroke-opacity=".75" stroke-width="1.8" paint-order="stroke" stroke-linejoin="round">চট্টগ্রাম</text><circle cx="894.8" cy="520.8" r="1.7" fill="#fff" fill-opacity=".7" stroke="#6b6b6b" stroke-width=".8"/><text x="899.4" y="482.3" font-family="DejaVu Sans, sans-serif" font-size="11" fill="#222" textLength="31.6" lengthAdjust="spacingAndGlyphs" stroke="#fff" stroke-opacity=".75" stroke-width="1.8" paint-order="stroke" stroke-linejoin="round">Aizawl</text><circle cx="914.8" cy="486.7" r="1.7" fill="#fff" fill-opacity=".7" stroke="#6b6b6b" stroke-width=".8"/><text x="927.4" y="494.5" font-family="DejaVu Sans, Noto Sans Bengali, Noto Sans Myanmar, sans-serif" font-size="11" fill="#222" textLength="34.4" lengthAdjust="spacingAndGlyphs" stroke="#fff" stroke-opacity=".75" stroke-width="1.8" paint-order="stroke" stroke-linejoin="round">ကလေး</text><circle cx="943.9" cy="499.8" r="1.7" fill="#fff" fill-opacity=".7" stroke="#6b6b6b" stroke-width=".8"/><text x="973.1" y="525.0" font-family="DejaVu Sans, Noto Sans Bengali, Noto Sans Myanmar, sans-serif" font-size="11" fill="#222" textLength="36.5" lengthAdjust="spacingAndGlyphs" stroke="#fff" stroke-opacity=".75" stroke-width="1.8" paint-order="stroke" stroke-linejoin="round">မန္တလေး</text><circle cx="990.8" cy="529.9" r="1.7" fill="#fff" fill-opacity=".7" stroke="#6b6b6b" stroke-width=".8"/><text x="1018.7" y="544.0" font-family="DejaVu Sans, Noto Sans Bengali, Noto Sans Myanmar, sans-serif" font-size="10" fill="#86598c" textLength="52.6" lengthAdjust="spacingAndGlyphs" stroke="#fff" stroke-opacity=".75" stroke-width="1.8" paint-order="stroke" stroke-linejoin="round">ရှမ်းပြည်နယ်</text><text x="950.4" y="569.3" font-family="DejaVu Sans, Noto Sans Bengali, Noto Sans Myanmar, sans-serif" font-size="11" fill="#222" textLength="29.1" lengthAdjust="spacingAndGlyphs" stroke="#fff" stroke-opacity=".75" stroke-width="1.8" paint-order="stroke" stroke-linejoin="round">မကွေး</text><circle cx="964.9" cy="574.8" r="1.7" fill="#fff" fill-opacity=".7" stroke="#6b6b6b" stroke-width=".8"/><text x="962.2" y="609.0" font-family="DejaVu Sans, Noto Sans Bengali, Noto Sans Myanmar, sans-serif" font-size="12.5" fill="#84588a" textLength="30.5" lengthAdjust="spacingAndGlyphs" stroke="#fff" stroke-opacity=".75" stroke-width="1.8" paint-order="stroke" stroke-linejoin="round">မြန်မာ</text><text x="1066.5" y="479.3" font-family="Noto Sans CJK SC, WenQuanYi Zen Hei, sans-serif" font-size="10.5" fill="#222" textLength="31.5" lengthAdjust="spacingAndGlyphs" stroke="#fff" stroke-opacity=".75" stroke-width="1.8" paint-order="stroke" stroke-linejoin="round">临沧市</text><circle cx="1082.9" cy="482.9" r="1.7" fill="#fff" fill-opacity=".7" stroke="#6b6b6b" stroke-width=".8"/><text x="1122.1" y="485.6" font-family="Noto Sans CJK SC, WenQuanYi Zen Hei, sans-serif" font-size="10.5" fill="#222" textLength="31.6" lengthAdjust="spacingAndGlyphs" stroke="#fff" stroke-opacity=".75" stroke-width="1.8" paint-order="stroke" stroke-linejoin="round">玉溪市</text><text x="1086.9" y="524.0" font-family="Noto Sans CJK SC, WenQuanYi Zen Hei, sans-serif" font-size="10.5" fill="#222" textLength="31.6" lengthAdjust="spacingAndGlyphs" stroke="#fff" stroke-opacity=".75" stroke-width="1.8" paint-order="stroke" stroke-linejoin="round">普洱市</text><circle cx="1102.9" cy="508.8" r="1.7" fill="#fff" fill-opacity=".7" stroke="#6b6b6b" stroke-width=".8"/><text x="1161.1" y="509.7" font-family="Noto Sans CJK SC, WenQuanYi Zen Hei, sans-serif" font-size="10.5" fill="#222" textLength="31.6" lengthAdjust="spacingAndGlyphs" stroke="#fff" stroke-opacity=".75" stroke-width="1.8" paint-order="stroke" stroke-linejoin="round">文山市</text><circle cx="1176.9" cy="494.9" r="1.7" fill="#fff" fill-opacity=".7" stroke="#6b6b6b" stroke-width=".8"/><text x="1215.4" y="496.6" font-family="Noto Sans CJK SC, WenQuanYi Zen Hei, sans-serif" font-size="10.5" fill="#222" textLength="31.4" lengthAdjust="spacingAndGlyphs" stroke="#fff" stroke-opacity=".75" stroke-width="1.8" paint-order="stroke" stroke-linejoin="round">百色市</text><circle cx="1231.0" cy="482.5" r="1.7" fill="#fff" fill-opacity=".7" stroke="#6b6b6b" stroke-width=".8"/><text x="1261.8" y="488.6" font-family="Noto Sans CJK SC, WenQuanYi Zen Hei, sans-serif" font-size="10" fill="#86598c" textLength="39.0" lengthAdjust="spacingAndGlyphs" stroke="#fff" stroke-opacity=".75" stroke-width="1.8" paint-order="stroke" stroke-linejoin="round">广西壮族</text><text x="1266.9" y="501.9" font-family="Noto Sans CJK SC, WenQuanYi Zen Hei, sans-serif" font-size="10" fill="#86598c" textLength="28.6" lengthAdjust="spacingAndGlyphs" stroke="#fff" stroke-opacity=".75" stroke-width="1.8" paint-order="stroke" stroke-linejoin="round">自治区</text><text x="1361.9" y="483.5" font-family="Noto Sans CJK SC, WenQuanYi Zen Hei, sans-serif" font-size="10.5" fill="#222" textLength="31.6" lengthAdjust="spacingAndGlyphs" stroke="#fff" stroke-opacity=".75" stroke-width="1.8" paint-order="stroke" stroke-linejoin="round">清远市</text><circle cx="1378.0" cy="487.8" r="1.7" fill="#fff" fill-opacity=".7" stroke="#6b6b6b" stroke-width=".8"/><text x="1327.9" y="508.2" font-family="Noto Sans CJK SC, WenQuanYi Zen Hei, sans-serif" font-size="10.5" fill="#222" textLength="31.6" lengthAdjust="spacingAndGlyphs" stroke="#fff" stroke-opacity=".75" stroke-width="1.8" paint-order="stroke" stroke-linejoin="round">肇庆市</text><circle cx="1363.8" cy="504.0" r="1.7" fill="#fff" fill-opacity=".7" stroke="#6b6b6b" stroke-width=".8"/><text x="1296.3" y="527.1" font-family="Noto Sans CJK SC, WenQuanYi Zen Hei, sans-serif" font-size="10.5" fill="#222" textLength="31.7" lengthAdjust="spacingAndGlyphs" stroke="#fff" stroke-opacity=".75" stroke-width="1.8" paint-order="stroke" stroke-linejoin="round">玉林市</text><circle cx="1312.0" cy="513.0" r="1.7" fill="#fff" fill-opacity=".7" stroke="#6b6b6b" stroke-width=".8"/><text x="1337.0" y="528.2" font-family="Noto Sans CJK SC, WenQuanYi Zen Hei, sans-serif" font-size="10.5" fill="#222" textLength="31.6" lengthAdjust="spacingAndGlyphs" stroke="#fff" stroke-opacity=".75" stroke-width="1.8" paint-order="stroke" stroke-linejoin="round">阳江市</text><circle cx="1352.8" cy="532.8" r="1.7" fill="#fff" fill-opacity=".7" stroke="#6b6b6b" stroke-width=".8"/><text x="1240.7" y="535.2" font-family="Noto Sans CJK SC, WenQuanYi Zen Hei, sans-serif" font-size="10.5" fill="#222" textLength="31.4" lengthAdjust="spacingAndGlyphs" stroke="#fff" stroke-opacity=".75" stroke-width="1.8" paint-order="stroke" stroke-linejoin="round">钦州市</text><circle cx="1277.0" cy="529.9" r="1.7" fill="#fff" fill-opacity=".7" stroke="#6b6b6b" stroke-width=".8"/><text x="1292.8" y="546.7" font-family="Noto Sans CJK SC, WenQuanYi Zen Hei, sans-serif" font-size="10.5" fill="#222" textLength="31.6" lengthAdjust="spacingAndGlyphs" stroke="#fff" stroke-opacity=".75" stroke-width="1.8" paint-order="stroke" stroke-linejoin="round">北海市</text><circle cx="1287.9" cy="541.9" r="1.7" fill="#fff" fill-opacity=".7" stroke="#6b6b6b" stroke-width=".8"/><text x="1196.9" y="547.2" font-family="DejaVu Sans, sans-serif" font-size="11" fill="#222" textLength="34.1" lengthAdjust="spacingAndGlyphs" stroke="#fff" stroke-opacity=".75" stroke-width="1.8" paint-order="stroke" stroke-linejoin="round">Hà Nội</text><circle cx="1214" cy="552.600" r="2.600" fill="#fff" fill-opacity=".8" stroke="#444" stroke-width=".9"/><circle cx="1214" cy="552.600" r="1" fill="#444"/><text x="1296.3" y="572.4" font-family="Noto Sans CJK SC, WenQuanYi Zen Hei, sans-serif" font-size="10.5" fill="#222" textLength="31.7" lengthAdjust="spacingAndGlyphs" stroke="#fff" stroke-opacity=".75" stroke-width="1.8" paint-order="stroke" stroke-linejoin="round">海口市</text><circle cx="1312.8" cy="576.7" r="1.7" fill="#fff" fill-opacity=".7" stroke="#6b6b6b" stroke-width=".8"/><text x="1184.3" y="578.8" font-family="DejaVu Sans, sans-serif" font-size="11" fill="#222" textLength="55.2" lengthAdjust="spacingAndGlyphs" stroke="#fff" stroke-opacity=".75" stroke-width="1.8" paint-order="stroke" stroke-linejoin="round">Thanh Hoá</text><circle cx="1212.1" cy="583.0" r="1.7" fill="#fff" fill-opacity=".7" stroke="#6b6b6b" stroke-width=".8"/>
<rect x="1144.200" y="590.300" width="245" height="17" fill="#fff" fill-opacity=".8"/>
<rect x="1149" y="594.200" width="12" height="4" fill="#4c7be1"/><rect x="1149" y="598.200" width="12" height="4" fill="#ffd500"/>
<text x="1163.8" y="601.900" font-family="Liberation Sans, sans-serif" font-size="12" fill="#0078a8" font-weight="700" textLength="38.8" lengthAdjust="spacingAndGlyphs">Leaflet</text>
<text x="1207.2" y="601.900" font-family="Liberation Sans, sans-serif" font-size="12" fill="#333" textLength="1.4" lengthAdjust="spacingAndGlyphs">|</text>
<text x="1212.7" y="601.900" font-family="Liberation Sans, sans-serif" font-size="12" fill="#333" textLength="9.1" lengthAdjust="spacingAndGlyphs">©</text>
<text x="1226.0" y="601.900" font-family="Liberation Sans, sans-serif" font-size="12" fill="#0078a8" font-weight="700" textLength="89.3" lengthAdjust="spacingAndGlyphs">OpenStreetMap</text>
<text x="1319.5" y="601.900" font-family="Liberation Sans, sans-serif" font-size="12" fill="#333" textLength="64.3" lengthAdjust="spacingAndGlyphs">contributors</text>
</svg>
</div>

<div id="dd" class="abs">
  <div id="d1" style="top:6px">Dhaka, Dhaka Metropolitan, Dhaka District, Dhaka Division, 1215, Bangladesh</div>
  <div id="d2" style="top:32px">Dhaka Division, Bangladesh</div>
  <div id="d3" style="top:59px">Dhaka District, Dhaka Division, Bangladesh</div>
  <div id="d4" style="top:85px">Dhaka, East Champaran District, Bihar, 845418, India</div>
  <div id="d5" style="top:111px">Dhaka, East Champaran District, Bihar, 845418, India</div>
</div>

<div class="abs lbl" id="t9" style="left:323px;top:629px">Latitude</div>
<div class="abs lbl" id="t10" style="left:880px;top:629px">Longitude</div>
<div class="abs inp" style="left:324px;top:653px;width:514px"><span id="t11">23.9456166</span></div>
<div class="abs inp" style="left:881px;top:653px;width:515px"><span id="t12">90.2526382</span></div>

<svg id="anno" class="abs" viewBox="0 0 1424 739">
  <rect x="307.500" y="337.500" width="620.500" height="135" fill="none" stroke="#ff2600" stroke-width="3"/>
  <line x1="271.500" y1="227" x2="211" y2="153.500" stroke="#ff2600" stroke-width="3" stroke-linecap="round"/>
  <path d="M196.200 135L216.900 151.700L208.900 158.500Z" fill="#ff2600"/>
  <line x1="1151" y1="283.200" x2="1019" y2="359" stroke="#ff2600" stroke-width="3" stroke-linecap="round"/>
  <path d="M996.300 371.200L1016.100 354.800L1021.200 363.400Z" fill="#ff2600"/>
</svg>
</div>
</body>
</html>
